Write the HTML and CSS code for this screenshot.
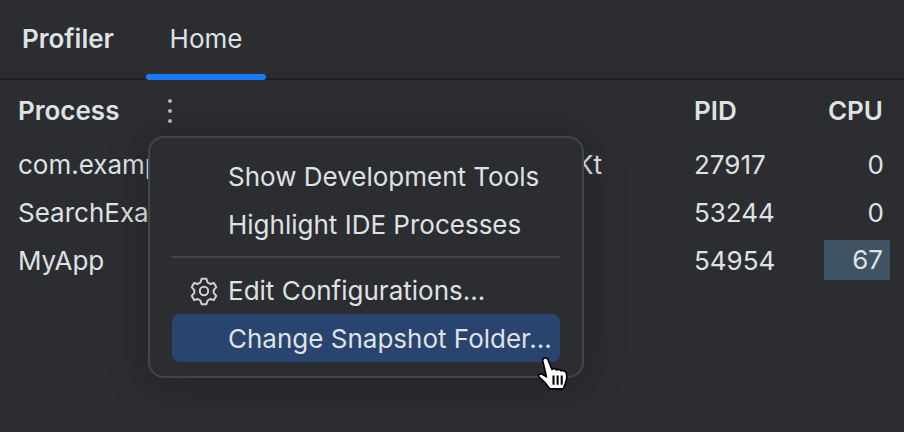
FILE: index.html
```html
<!DOCTYPE html>
<html lang="en">
<head>
  <meta charset="UTF-8" />
  <title>Profiler</title>
  <link rel="stylesheet" href="styles.css">
</head>
<body>
  <div class="main">
    <!-- Tool window header -->
    <div class="tabBar">
      <span class="toolTitle">Profiler</span>
      <div class="tab">Home</div>
    </div>

    <!-- Process table -->
    <div class="table">
      <div class="row headRow">
        <div class="nameCell">
          <span>Process</span>
          <svg class="kebab" width="6" height="24" viewBox="0 0 6 24">
            <circle cx="3" cy="2" r="2" />
            <circle cx="3" cy="12" r="2" />
            <circle cx="3" cy="22" r="2" />
          </svg>
        </div>
        <div class="pidCell">PID</div>
        <div class="cpuCell">CPU</div>
      </div>
      <div class="row">
        <div class="nameCell spread"><span>com.example</span><span>Kt</span></div>
        <div class="pidCell">27917</div>
        <div class="cpuCell">0</div>
      </div>
      <div class="row">
        <div class="nameCell"><span>SearchExample</span></div>
        <div class="pidCell">53244</div>
        <div class="cpuCell">0</div>
      </div>
      <div class="row">
        <div class="nameCell"><span>MyApp</span></div>
        <div class="pidCell">54954</div>
        <div class="cpuCell busy">67</div>
      </div>
    </div>

    <!-- Popup menu -->
    <div class="menu">
      <div class="menuItem">Show Development Tools</div>
      <div class="menuItem">Highlight IDE Processes</div>
      <div class="separator"></div>
      <div class="menuItem">
        <svg class="gear" width="30" height="30" viewBox="0 0 30 30" fill="none">
          <path d="M12.600 2.800h4.800l1.200 3.700 2.500 1.400 3.800-.8 2.400 4.100-2.600 2.900v2.800l2.600 2.900-2.400 4.100-3.800-.8-2.500 1.400-1.200 3.700h-4.800l-1.200-3.700-2.500-1.400-3.800.8-2.400-4.100 2.600-2.900v-2.800l-2.600-2.900 2.400-4.100 3.800.8 2.500-1.400z" stroke-linejoin="round" />
          <circle cx="15" cy="15" r="4.200" />
        </svg>
        Edit Configurations...
      </div>
      <div class="menuItem active">Change Snapshot Folder...</div>
    </div>

    <!-- Mouse pointer -->
    <svg class="pointer" width="35" height="37" viewBox="0 0 32 36">
      <path d="M5.500 5.500c-.5-2.500 3.800-4 5-1.200l4 9.700c1-1.200 3.400-1 4.500.7 1-1.100 3.300-.9 4.300.8 1.300-1 4.200-.3 5 1.800.8 2.200.4 7.400-.8 10.500L25.500 33H12.500L7.500 26.500 2.300 21.800c-1.500-1.500-.3-3.800 1.800-3.400 1.600.3 3.200 1.600 5 2.900z" fill="#fff" stroke="#000" stroke-width="1.600" stroke-linejoin="round" />
      <path d="M16 20v9M20 20v9M24 20v9" stroke="#000" stroke-width="2" fill="none" />
    </svg>
  </div>
</body>
</html>
```

FILE: styles.css
```css
/* Base reset */
* {
  box-sizing: border-box;
  margin: 0;
  padding: 0;
}

body {
  font-family: "Inter", "Liberation Sans", sans-serif;
  font-size: 26px;
  color: #dfe1e5;
  background-color: #2b2d30;
  overflow: hidden;
}

.main {
  position: relative;
  width: 904px;
  height: 432px;
}

/* Tool window header */
.tabBar {
  display: flex;
  height: 80px;
  padding-left: 22px;
  border-bottom: 2px solid #1e1f22;
}

.toolTitle {
  font-weight: 600;
  line-height: 78px;
  width: 124px;
}

.tab {
  position: relative;
  width: 120px;
  height: 80px;
  line-height: 78px;
  text-align: center;
}
.tab::after {
  content: "";
  position: absolute;
  left: 0;
  right: 0;
  bottom: 0;
  height: 6px;
  border-radius: 3px;
  background-color: #1a7afa;
}

/* Process table */
.table {
  display: flex;
  flex-direction: column;
  padding: 12px 14px 0 18px;
}

.row {
  display: flex;
  align-items: stretch;
  height: 48px;
  line-height: 48px;
}

.headRow {
  height: 38px;
  line-height: 38px;
  margin-bottom: 11px;
  font-weight: 600;
}

.nameCell {
  width: 676px;
  padding-right: 92px;
  display: flex;
  align-items: center;
  gap: 48px;
  white-space: nowrap;
  overflow: hidden;
}
.nameCell.spread {
  justify-content: space-between;
}

.kebab {
  fill: #b4b8bf;
}

.pidCell {
  width: 130px;
}

.cpuCell {
  width: 66px;
  height: 48px;
  line-height: 48px;
  padding-right: 6px;
  text-align: right;
}
.headRow .cpuCell {
  height: 38px;
  line-height: 38px;
  padding-right: 7px;
}
.cpuCell.busy {
  height: 40px;
  line-height: 40px;
  margin-top: 3px;
  padding-right: 7px;
  background-color: #3f5362;
}

/* Popup menu */
.menu {
  position: absolute;
  left: 148px;
  top: 136px;
  width: 436px;
  height: 242px;
  padding: 15px 22px;
  background-color: #2b2d30;
  border: 2px solid #43454a;
  border-radius: 16px;
  box-shadow: 0 4px 40px rgba(0, 0, 0, 0.25);
}

.menuItem {
  position: relative;
  height: 48px;
  line-height: 48px;
  padding-left: 56px;
  white-space: nowrap;
  border-radius: 8px;
}
.menuItem.active {
  margin-top: -1px;
  line-height: 50px;
  background-color: #29446f;
}

.separator {
  height: 2px;
  margin: 7px 0 9px;
  background-color: #43454a;
}

.gear {
  position: absolute;
  left: 17px;
  top: 9px;
  stroke: #ced0d6;
  stroke-width: 2;
}

.pointer {
  position: absolute;
  left: 536px;
  top: 355px;
}
```
